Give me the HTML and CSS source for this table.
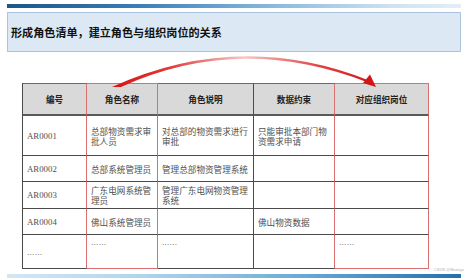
FILE: index.html
```html
<!DOCTYPE html>
<html lang="zh">
<head>
<meta charset="utf-8">
<link rel="stylesheet" href="styles.css">
</head>
<body>
<div class="page">
  <div class="topbar"></div>
  <div class="title-box">形成角色清单，建立角色与组织岗位的关系</div>
  <div class="grid">
    <div class="th">编号</div>
    <div class="th hl">角色名称</div>
    <div class="th">角色说明</div>
    <div class="th pre">数据约束</div>
    <div class="th hl">对应组织岗位</div>

    <div class="td latin">AR0001</div>
    <div class="td">总部物资需求审批人员</div>
    <div class="td">对总部的物资需求进行审批</div>
    <div class="td pre">只能审批本部门物资需求申请</div>
    <div class="td"></div>

    <div class="td latin">AR0002</div>
    <div class="td">总部系统管理员</div>
    <div class="td">管理总部物资管理系统</div>
    <div class="td pre"></div>
    <div class="td"></div>

    <div class="td latin">AR0003</div>
    <div class="td">广东电网系统管理员</div>
    <div class="td">管理广东电网物资管理系统</div>
    <div class="td pre"></div>
    <div class="td"></div>

    <div class="td latin">AR0004</div>
    <div class="td">佛山系统管理员</div>
    <div class="td"></div>
    <div class="td pre">佛山物资数据</div>
    <div class="td"></div>

    <div class="td last dots">......</div>
    <div class="td last top dots">......</div>
    <div class="td last top dots">......</div>
    <div class="td last pre"></div>
    <div class="td last top dots">......</div>
  </div>
  <div class="bottombar"></div>
  <div class="watermark">CSDN @Beaeya</div>
  <svg class="arc" width="474" height="278" viewBox="0 0 474 278">
    <defs>
      <linearGradient id="arcg" x1="112" y1="0" x2="376" y2="0" gradientUnits="userSpaceOnUse">
        <stop offset="0" stop-color="#d41515"/>
        <stop offset="0.22" stop-color="#e03a3a"/>
        <stop offset="0.5" stop-color="#f6c8c8"/>
        <stop offset="0.78" stop-color="#e04545"/>
        <stop offset="1" stop-color="#d41515"/>
      </linearGradient>
    </defs>
    <path d="M112 87 Q240 29 369 80.5 L368 82.5 Q240 33 121 87 Z" fill="url(#arcg)"/>
    <polygon points="376,87 363,83 370,74.5" fill="#d41515"/>
  </svg>
</div>
</body>
</html>
```

FILE: styles.css
```css
html, body {
  margin: 0;
  padding: 0;
  background: #ffffff;
}

.page {
  position: relative;
  width: 474px;
  height: 278px;
  overflow: hidden;
  box-sizing: border-box;
  padding: 4px 0 0 7px;
  font-family: "Noto Sans CJK SC", "Liberation Serif", serif;
}

.topbar {
  width: 454px;
  height: 4px;
  background: linear-gradient(to right, #1b5688 0%, #3a7cb6 28%, #86b8de 58%, #cfe2f1 85%, #e4eef7 100%);
}

.title-box {
  box-sizing: border-box;
  margin-top: 4px;
  width: 454px;
  height: 40px;
  background: #dce9f5;
  border: 1px solid #a9c4dc;
  display: flex;
  align-items: center;
  padding-left: 3px;
  font-size: 11.1px;
  font-weight: 700;
  color: #111;
}

.grid {
  margin: 31px 0 0 15px;
  width: 407px;
  box-sizing: border-box;
  border-left: 1px solid #4a4a4a;
  display: grid;
  grid-template-columns: 64px 71px 96px 81px 94px;
  grid-template-rows: 33px 40px 26px 27px 26px 34px;
}

.th,
.td {
  box-sizing: border-box;
  border-right: 1px solid #4a4a4a;
  border-bottom: 1px solid #4a4a4a;
  display: flex;
  align-items: center;
  font-size: 8.6px;
  line-height: 10px;
}

.th {
  background: #d9d9d9;
  border-top: 1px solid #6a6a6a;
  border-bottom: 2px solid #5a5a5a;
  justify-content: center;
  font-weight: 700;
  color: #222;
}

.td {
  padding: 0 4px;
  color: #505050;
  background: #fff;
}

.latin {
  font-family: "Liberation Serif", serif;
  font-size: 8.8px;
}

.dots {
  font-family: "Liberation Serif", serif;
  font-size: 9px;
  color: #555;
  letter-spacing: 0.3px;
}

.th:nth-child(5n+1),
.td:nth-child(5n+1),
.th:nth-child(5n+2),
.td:nth-child(5n+2),
.th.pre,
.td.pre,
.th:nth-child(5n),
.td:nth-child(5n) {
  border-right-color: #d9706f;
}

.th.hl {
  border-top-color: #d9706f;
}

.last:nth-child(5n+2),
.last:nth-child(5n) {
  border-bottom-color: #d9706f;
}

.top {
  align-items: flex-start;
  padding-top: 2px;
}

.bottombar {
  margin-top: 5px;
  width: 454px;
  height: 4px;
  background: linear-gradient(to right, #d3e7f4 0%, #b0d4ec 30%, #6aa9d6 65%, #2370ae 100%);
}

.watermark {
  position: absolute;
  right: 10px;
  bottom: 6px;
  font-family: "Liberation Sans", sans-serif;
  font-size: 4px;
  color: #b0b0b0;
}

.arc {
  position: absolute;
  left: 0;
  top: 0;
  pointer-events: none;
}
```
